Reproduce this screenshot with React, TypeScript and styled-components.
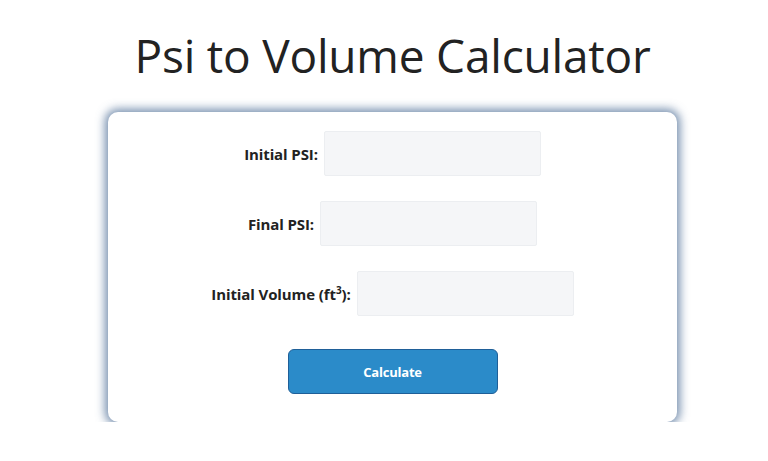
import styled, { createGlobalStyle } from "styled-components";

const GlobalStyle = createGlobalStyle`
  body {
    margin: 0;
    background: #ffffff;
    font-family: "Open Sans", "Noto Sans", sans-serif;
    color: #222222;
  }
`;

const Page = styled.main`
  display: flex;
  flex-direction: column;
  align-items: center;
  padding: 22px 0 0 17px;
`;

const Title = styled.h1`
  margin: 0;
  font-size: 46px;
  font-weight: 400;
  line-height: 66px;
  color: #222222;
  letter-spacing: -0.2px;
`;

const Card = styled.form`
  box-sizing: border-box;
  width: 569px;
  margin-top: 24px;
  padding: 19px 20px 28px;
  background: #ffffff;
  border-radius: 10px;
  box-shadow: 0 0 10px 3px rgba(60, 95, 140, 0.7);
  display: flex;
  flex-direction: column;
  align-items: center;
  gap: 25px;
`;

const Row = styled.div`
  display: flex;
  align-items: center;
  justify-content: center;
  gap: 6px;
`;

const Label = styled.label`
  font-size: 15px;
  font-weight: 700;
  color: #222222;
  letter-spacing: -0.1px;

  sup {
    font-size: 10px;
    line-height: 0;
  }
`;

const Input = styled.input`
  box-sizing: border-box;
  width: 217px;
  height: 45px;
  border: 1px solid #eceef1;
  background: #f5f6f8;
  border-radius: 2px;
  outline: none;
`;

const Button = styled.button`
  box-sizing: border-box;
  width: 210px;
  height: 45px;
  margin-top: 8px;
  border: 1px solid #1f5f98;
  border-radius: 6px;
  background: #2b8bc9;
  color: #ffffff;
  font-family: "Open Sans", sans-serif;
  font-size: 13px;
  font-weight: 700;
  letter-spacing: -0.2px;
  cursor: pointer;
`;

const fields = [
  { id: "initial-psi", label: <>Initial PSI:</> },
  { id: "final-psi", label: <>Final PSI:</> },
  { id: "initial-volume", label: <>Initial Volume (ft<sup>3</sup>):</> },
];

export default function App() {
  return (
    <>
      <GlobalStyle />
      <Page>
        <Title>Psi to Volume Calculator</Title>
        <Card onSubmit={(e) => e.preventDefault()}>
          {fields.map((f) => (
            <Row key={f.id}>
              <Label htmlFor={f.id}>{f.label}</Label>
              <Input id={f.id} type="text" />
            </Row>
          ))}
          <Button type="submit">Calculate</Button>
        </Card>
      </Page>
    </>
  );
}
